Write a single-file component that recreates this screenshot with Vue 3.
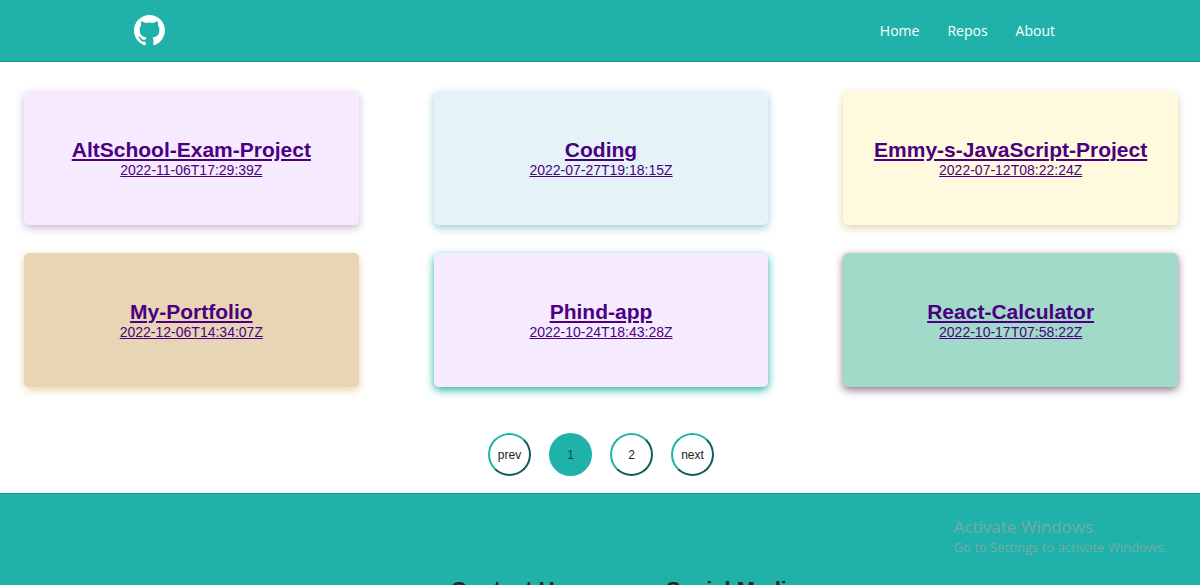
<template>
  <div class="page">
    <header class="navbar">
      <a class="logo" href="#" aria-label="GitHub">
        <svg viewBox="0 0 16 16" xmlns="http://www.w3.org/2000/svg">
          <path
            d="M8 0C3.58 0 0 3.58 0 8c0 3.54 2.29 6.53 5.47 7.59.4.07.55-.17.55-.38 0-.19-.01-.82-.01-1.49-2.01.37-2.53-.49-2.69-.94-.09-.23-.48-.94-.82-1.13-.28-.15-.68-.52-.01-.53.63-.01 1.08.58 1.23.82.72 1.21 1.87.87 2.33.66.07-.52.28-.87.51-1.07-1.78-.2-3.64-.89-3.64-3.95 0-.87.31-1.59.82-2.15-.08-.2-.36-1.02.08-2.12 0 0 .67-.21 2.2.82.64-.18 1.32-.27 2-.27s1.36.09 2 .27c1.53-1.04 2.2-.82 2.2-.82.44 1.1.16 1.92.08 2.12.51.56.82 1.27.82 2.15 0 3.07-1.87 3.75-3.65 3.95.29.25.54.73.54 1.48 0 1.07-.01 1.93-.01 2.2 0 .21.15.46.55.38A8.01 8.01 0 0 0 16 8c0-4.42-3.58-8-8-8z"
          />
        </svg>
      </a>
      <nav class="nav-links">
        <a v-for="link in links" :key="link" href="#">{{ link }}</a>
      </nav>
    </header>

    <main>
      <section class="repos">
        <a
          v-for="repo in repos"
          :key="repo.name"
          class="card"
          :class="repo.theme"
          href="#"
        >
          <h2>{{ repo.name }}</h2>
          <p>{{ repo.created }}</p>
        </a>
      </section>

      <div class="pagination">
        <button type="button" @click="go(page - 1)">prev</button>
        <button
          v-for="n in pages"
          :key="n"
          type="button"
          :class="{ active: n === page }"
          @click="go(n)"
        >
          {{ n }}
        </button>
        <button type="button" @click="go(page + 1)">next</button>
      </div>
    </main>

    <footer class="footer">
      <h2>Contact Us</h2>
      <h2>Social Media</h2>
    </footer>

    <aside class="watermark">
      <p class="watermark-title">Activate Windows</p>
      <p>Go to Settings to activate Windows.</p>
    </aside>
  </div>
</template>

<script setup>
import { ref } from 'vue';

const links = ['Home', 'Repos', 'About'];

const repos = [
  { name: 'AltSchool-Exam-Project', created: '2022-11-06T17:29:39Z', theme: 'lilac' },
  { name: 'Coding', created: '2022-07-27T19:18:15Z', theme: 'sky' },
  { name: 'Emmy-s-JavaScript-Project', created: '2022-07-12T08:22:24Z', theme: 'cream' },
  { name: 'My-Portfolio', created: '2022-12-06T14:34:07Z', theme: 'sand' },
  { name: 'Phind-app', created: '2022-10-24T18:43:28Z', theme: 'orchid' },
  { name: 'React-Calculator', created: '2022-10-17T07:58:22Z', theme: 'mint' }
];

const pages = 2;
const page = ref(1);

function go(n) {
  page.value = Math.min(Math.max(n, 1), pages);
}
</script>

<style>
body {
  margin: 0;
  background: #fff;
}
</style>

<style scoped>
.page {
  font-family: "Liberation Sans", Arial, sans-serif;
}

h2,
p {
  margin: 0;
}

/* navbar */
.navbar {
  display: flex;
  align-items: center;
  justify-content: space-between;
  box-sizing: border-box;
  height: 62px;
  padding: 0 12% 0 11%;
  background: #20b2aa;
  border-bottom: 1px solid #109a92;
}

.logo {
  display: flex;
  padding: 0 2px 1px;
}

.logo svg {
  width: 31px;
  height: 31px;
  fill: #fff;
}

.nav-links {
  display: flex;
  gap: 28px;
  padding-right: 1px;
}

.nav-links a {
  color: #fff;
  font-family: "Open Sans", "Noto Sans", sans-serif;
  font-size: 14px;
  text-decoration: none;
}

/* cards */
.repos {
  display: grid;
  grid-template-columns: repeat(3, 1fr);
  gap: 28px 75px;
  padding: 29px 22px 46px 24px;
}

.card {
  padding: 46px 8px;
  border-radius: 5px;
  color: #4b0082;
  text-align: center;
}

.card h2 {
  font-size: 21px;
  line-height: 25px;
}

.card p {
  font-size: 14px;
  line-height: 17px;
}

.lilac {
  background: #f6eafe;
  box-shadow: 0 3px 8px #cdb6d6;
}

.sky {
  background: #e5f3f8;
  box-shadow: 0 3px 8px #9ecad6;
}

.cream {
  background: #fff9de;
  box-shadow: 0 3px 8px #ddd5b0;
}

.sand {
  background: #e7d5b5;
  box-shadow: 0 3px 8px #ead2a8;
}

.orchid {
  background: #f6eafe;
  box-shadow: 0 3px 8px #20b2aa;
}

.mint {
  background: #a1dac9;
  box-shadow: 0 3px 8px #88768c;
}

/* pagination */
.pagination {
  display: flex;
  justify-content: center;
  gap: 18px;
  padding: 0 0 17px 2px;
}

.pagination button {
  width: 43px;
  height: 43px;
  padding: 0;
  border: 2px outset #20b2aa;
  border-radius: 50%;
  background: #fff;
  color: #222;
  font-family: inherit;
  font-size: 12px;
  cursor: pointer;
}

.pagination .active {
  border: 2px solid #20b2aa;
  background: #20b2aa;
  color: #0b4a35;
}

/* footer */
.footer {
  display: flex;
  justify-content: center;
  gap: 99px;
  padding: 83px 0 84px 50px;
  border-top: 1px solid #109a92;
  background: #20b2aa;
  color: #2a2626;
}

.footer h2 {
  font-size: 22px;
  line-height: 25px;
}

.watermark {
  position: fixed;
  right: 33px;
  bottom: 29px;
  color: #78aaa6;
  font-family: "Open Sans", "Noto Sans", sans-serif;
  font-size: 13px;
  line-height: 18px;
  pointer-events: none;
}

.watermark-title {
  font-size: 17px;
  line-height: 22px;
}
</style>
